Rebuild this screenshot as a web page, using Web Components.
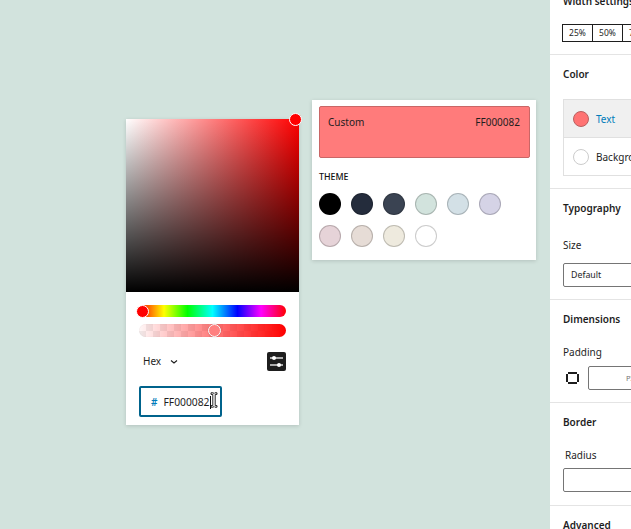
<!DOCTYPE html>
<html>
<head>
<meta charset="utf-8">
<style>
  html, body { margin: 0; height: 529px; overflow: hidden; }
  body { background: #d2e3dd; font-family: "Noto Sans", sans-serif; color: #1e1e1e; display: flex; justify-content: flex-end; }
</style>
</head>
<body>
<settings-sidebar>
  <panel-section first>
    <span class="title" slot="title">Width settings</span>
    <width-buttons></width-buttons>
  </panel-section>
  <panel-section heading="Color">
    <color-rows></color-rows>
  </panel-section>
  <panel-section heading="Typography">
    <field-label loose>Size</field-label>
    <text-box value="Default" left></text-box>
  </panel-section>
  <panel-section heading="Dimensions">
    <field-label>Padding</field-label>
    <text-box value="PX" pad="37" icon></text-box>
  </panel-section>
  <panel-section heading="Border">
    <field-label nudge>Radius</field-label>
    <text-box value="PX" pad="67"></text-box>
  </panel-section>
  <panel-section heading="Advanced"></panel-section>
</settings-sidebar>
<color-picker></color-picker>
<swatch-popover></swatch-popover>

<script>
class SettingsSidebar extends HTMLElement {
  constructor() {
    super();
    this.attachShadow({ mode: "open" });
    this.shadowRoot.innerHTML = `
      <style>
        :host { display: block; width: 81px; height: 529px; background: #fff; overflow: hidden; }
        .inner { width: 290px; }
      </style>
      <div class="inner"><slot></slot></div>`;
  }
}

class PanelSection extends HTMLElement {
  constructor() {
    super();
    this.attachShadow({ mode: "open" });
    const heading = this.getAttribute("heading");
    this.shadowRoot.innerHTML = `
      <style>
        :host { display: block; border-bottom: 1px solid #e4e4e4; padding: 12px 13px; font-size: 10px; }
        :host([first]) { display: flow-root; padding-top: 0; padding-bottom: 0; height: 54px; }
        :host(:last-child) { border-bottom: 0; }
        .head { font-weight: 600; line-height: 15px; margin: 0 0 18px; }
        ::slotted(.title) { display: block; margin-top: -6px; font-weight: 600; line-height: 15px; white-space: nowrap; }
      </style>
      ${heading ? `<div class="head">${heading}</div>` : ""}
      <slot name="title"></slot>
      <slot></slot>`;
  }
}

class WidthButtons extends HTMLElement {
  constructor() {
    super();
    this.attachShadow({ mode: "open" });
    this.shadowRoot.innerHTML = `
      <style>
        :host { display: flex; margin-top: 15px; width: max-content; font-size: 8.5px; color: #1e1e1e; }
        span { width: 31px; height: 18px; line-height: 16px; box-sizing: border-box; text-align: center; border: 1px solid #1e1e1e; margin-left: -1px; }
        span:first-child { margin-left: 0; }
      </style>
      <span>25%</span><span>50%</span><span>75%</span><span>100%</span>`;
  }
}

class ColorRows extends HTMLElement {
  constructor() {
    super();
    this.attachShadow({ mode: "open" });
    this.shadowRoot.innerHTML = `
      <style>
        :host { display: block; border: 1px solid #e0e0e0; font-size: 10px; margin-top: -1px; }
        .row { display: flex; align-items: center; gap: 7px; height: 37px; padding-left: 9px; }
        .row + .row { border-top: 1px solid #e0e0e0; }
        .on { background: #f0f0f0; color: #007cba; }
        i { width: 16px; height: 16px; box-sizing: border-box; border-radius: 50%; border: 1px solid #ccc; background: #fff; }
        .on i { background: #ff7373; border-color: #b96060; }
      </style>
      <div class="row on"><i></i>Text</div>
      <div class="row"><i></i>Background</div>`;
  }
}

class FieldLabel extends HTMLElement {
  constructor() {
    super();
    this.attachShadow({ mode: "open" });
    this.shadowRoot.innerHTML = `
      <style>
        :host { display: block; font-size: 10px; line-height: 15px; margin-bottom: 6px; }
        :host([loose]) { padding-top: 4px; margin-bottom: 10px; }
        :host([nudge]) { padding-left: 2px; margin-bottom: 5px; }
      </style><slot></slot>`;
  }
}

class TextBox extends HTMLElement {
  constructor() {
    super();
    this.attachShadow({ mode: "open" });
    const left = this.hasAttribute("left");
    const pad = left ? 7 : this.getAttribute("pad");
    const icon = this.hasAttribute("icon") ? `<svg width="25" height="24" viewBox="0 0 25 24" style="flex:none">
        <path d="M5 7h9M5 17h9M4 8v8M15 8v8" stroke="#1e1e1e" stroke-width="2" fill="none"/></svg>` : "";
    this.shadowRoot.innerHTML = `
      <style>
        :host { display: flex; align-items: center; }
        :host([pad="67"]) { margin-bottom: 1px; }
        .box { flex: 1; height: 24px; box-sizing: border-box; border: 1px solid #757575; border-radius: 2px; display: flex; align-items: center; font-size: ${left ? 8.8 : 7.5}px; padding-left: ${pad}px; color: ${left ? "#1e1e1e" : "#757575"}; }
      </style>
      ${icon}<div class="box">${this.getAttribute("value")}</div>`;
  }
}

class ColorPicker extends HTMLElement {
  constructor() {
    super();
    this.attachShadow({ mode: "open" });
    this.shadowRoot.innerHTML = `
      <style>
        :host { position: absolute; left: 126px; top: 119px; width: 173px; height: 306px; background: #fff; box-shadow: 0 1px 4px rgba(0,0,0,.15); font-size: 10px; display: flex; flex-direction: column; }
        .sat { position: relative; height: 173px; flex: none; background: linear-gradient(to top, #000, transparent), linear-gradient(to right, #fff, #f00); }
        .dot { position: absolute; border-radius: 50%; box-sizing: border-box; }
        .sat .dot { right: -3px; top: -6px; width: 13px; height: 13px; background: #f00; border: 1px solid #fff; }
        .controls { padding: 13px 13px 0 12px; display: flex; flex-direction: column; }
        .bar { position: relative; height: 13px; border-radius: 7px; margin-left: 1px; }
        .hue { height: 12px; margin-bottom: 1px; background: linear-gradient(to right, #f00 0%, #ff0 17%, #0f0 33%, #0ff 50%, #00f 67%, #f0f 83%, #f00 100%); }
        .alpha { margin-top: 6px; background: linear-gradient(to right, rgba(255,0,0,.03), #f00), repeating-conic-gradient(#efefef 0 25%, #fff 0 50%) 0 0 / 14px 14px; box-shadow: inset 0 0 1px rgba(0,0,0,.15); }
        .hue .dot { left: -3px; top: 0; width: 13px; height: 13px; background: #f00; border: 1px solid #fff; }
        .alpha .dot { left: 69px; top: 0; width: 13px; height: 13px; background: #ff8080; border: 1px solid #fff; box-shadow: 0 0 1px rgba(0,0,0,.4); }
        .mode { display: flex; align-items: center; margin: 15px 0 0 5px; height: 19px; color: #1e1e1e; }
        .mode span { position: relative; top: -1px; }
        .mode svg.chev { margin-left: 9px; }
        .tune { margin-left: auto; width: 19px; height: 19px; background: #1e1e1e; border-radius: 2px; display: block; }
        .hex { margin: 15px 0 0 1px; width: 83px; height: 31px; box-sizing: border-box; border: 2px solid #00638c; border-radius: 2px; display: flex; align-items: center; padding-left: 10px; gap: 6px; position: relative; }
        .hex b { color: #007cba; font-weight: 600; font-size: 10px; }
        .hex span { font-size: 10.3px; color: #1e1e1e; }
        .caret { position: absolute; left: 69px; top: 8px; width: 1px; height: 13px; background: #111; }
        .cursor { position: absolute; left: 69px; top: 4px; }
      </style>
      <div class="sat"><div class="dot"></div></div>
      <div class="controls">
        <div class="bar hue"><div class="dot"></div></div>
        <div class="bar alpha"><div class="dot"></div></div>
        <div class="mode"><span>Hex</span>
          <svg class="chev" width="8" height="6" viewBox="0 0 8 6"><path d="M1 1.5l3 2.5 3-2.5" stroke="#1e1e1e" stroke-width="1.1" fill="none"/></svg>
          <svg class="tune" viewBox="0 0 19 19">
            <path d="M3 6h13M3 13h13" stroke="#ddd" stroke-width="1.4"/>
            <circle cx="7" cy="6" r="2" fill="#fff"/><circle cx="12" cy="13" r="2" fill="#fff"/>
          </svg>
        </div>
        <div class="hex"><b>#</b><span>FF000082</span>
          <div class="caret"></div>
          <svg class="cursor" width="8" height="16" viewBox="0 0 8 16"><path d="M1 .8h2.2l.8.8.8-.8H7v1.6H5.2v11.2H7v1.6H4.8l-.8-.8-.8.8H1v-1.6h1.8V2.4H1z" fill="#fff" stroke="#111" stroke-width=".9"/></svg>
        </div>
      </div>`;
  }
}

class SwatchPopover extends HTMLElement {
  constructor() {
    super();
    this.attachShadow({ mode: "open" });
    const colors = ["#000000","#242c3c","#3a4352","#d2e3dd","#d3e0e6","#d5d3e6","#e6d3d8","#e6dcd6","#eeeade","#ffffff"];
    this.shadowRoot.innerHTML = `
      <style>
        :host { position: absolute; left: 312px; top: 100px; width: 224px; height: 160px; background: #fff; box-shadow: 0 1px 4px rgba(0,0,0,.15); box-sizing: border-box; padding: 6px 6px 0 7px; font-size: 10px; display: flex; flex-direction: column; }
        .custom { height: 52px; box-sizing: border-box; width: 211px; background: #ff7b7b; border: 1px solid #c96666; border-radius: 2px; display: flex; justify-content: space-between; padding: 8px 9px 8px 8px; line-height: 14px; color: #1e1e1e; }
        h4 { margin: 12px 0 9px; font-size: 8.8px; font-weight: 500; line-height: 14px; color: #111; }
        .grid { display: grid; grid-template-columns: repeat(6, 22px); gap: 10px; }
        i { width: 22px; height: 22px; box-sizing: border-box; border-radius: 50%; border: 1px solid rgba(0,0,0,.2); }
      </style>
      <div class="custom"><span>Custom</span><span>FF000082</span></div>
      <h4>THEME</h4>
      <div class="grid">${colors.map(c => `<i style="background:${c}"></i>`).join("")}</div>`;
  }
}

customElements.define("settings-sidebar", SettingsSidebar);
customElements.define("panel-section", PanelSection);
customElements.define("width-buttons", WidthButtons);
customElements.define("color-rows", ColorRows);
customElements.define("field-label", FieldLabel);
customElements.define("text-box", TextBox);
customElements.define("color-picker", ColorPicker);
customElements.define("swatch-popover", SwatchPopover);
</script>
</body>
</html>
